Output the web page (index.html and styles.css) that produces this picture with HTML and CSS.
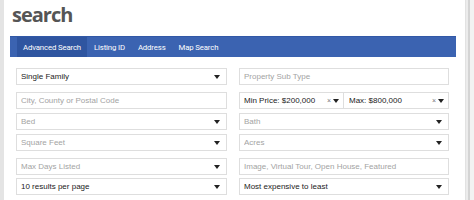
FILE: index.html
```html
<!DOCTYPE html>
<html lang="en">
<head>
  <meta charset="UTF-8">
  <title>Search</title>
  <link rel="stylesheet" href="styles.css">
</head>
<body>
  <div class="page">
    <div class="content">
      <h1 class="title">search</h1>

      <nav class="tabs">
        <a class="tab active">Advanced Search</a>
        <a class="tab">Listing ID</a>
        <a class="tab">Address</a>
        <a class="tab">Map Search</a>
      </nav>

      <form class="search-form">
        <div class="row">
          <div class="field select"><span class="value">Single Family</span><span class="caret"></span></div>
          <div class="field"><span class="placeholder">Property Sub Type</span></div>
        </div>
        <div class="row gap-lg">
          <div class="field"><span class="placeholder">City, County or Postal Code</span></div>
          <div class="price-pair">
            <div class="field select"><span class="value">Min Price: $200,000</span><span class="clear">&times;</span><span class="caret"></span></div>
            <div class="field select"><span class="value">Max: $800,000</span><span class="clear">&times;</span><span class="caret"></span></div>
          </div>
        </div>
        <div class="row">
          <div class="field select"><span class="placeholder">Bed</span><span class="caret"></span></div>
          <div class="field select"><span class="placeholder">Bath</span><span class="caret"></span></div>
        </div>
        <div class="row">
          <div class="field select"><span class="placeholder">Square Feet</span><span class="caret"></span></div>
          <div class="field select"><span class="placeholder">Acres</span><span class="caret"></span></div>
        </div>
        <div class="row gap-lg">
          <div class="field select"><span class="placeholder">Max Days Listed</span><span class="caret"></span></div>
          <div class="field"><span class="placeholder">Image, Virtual Tour, Open House, Featured</span></div>
        </div>
        <div class="row gap-sm">
          <div class="field select"><span class="value">10 results per page</span><span class="caret"></span></div>
          <div class="field select"><span class="value">Most expensive to least</span><span class="caret"></span></div>
        </div>
      </form>
    </div>
    <div class="side-strip"></div>
  </div>
</body>
</html>
```

FILE: styles.css
```css
body {
  margin: 0;
  background: #fff;
  font-family: 'Liberation Sans', Arial, sans-serif;
  overflow: hidden;
}

.page {
  display: flex;
  height: 200px;
  border-left: 4px solid #e4e4e4;
}

.content {
  flex: 1;
  padding: 0 9px 0 6px;
}

.side-strip {
  width: 8px;
  background: #ececec;
  border-left: 1px solid #e2e2e2;
  box-shadow: inset -4px 0 0 #f2f2f2, inset -6px 0 0 #d4d4d4;
}

.title {
  margin: 0;
  padding: 2px 0 0 2px;
  height: 34px;
  box-sizing: border-box;
  font-family: 'Open Sans', sans-serif;
  font-weight: 700;
  font-size: 20px;
  line-height: 26px;
  color: #555;
  letter-spacing: -1px;
}

.tabs {
  display: flex;
  height: 21px;
  margin-top: 2px;
  padding-left: 7px;
  background: #3b63b1;
  border-top: 1px solid #3158a6;
  box-sizing: border-box;
}

.tab {
  display: flex;
  align-items: center;
  padding: 0 6px;
  margin-right: 1px;
  font-family: 'Roboto', sans-serif;
  font-size: 7.8px;
  color: #fff;
  letter-spacing: -0.15px;
}

.tab.active {
  background: #2f55a0;
}

.search-form {
  padding: 11px 7px 0 6px;
}

.row {
  display: grid;
  grid-template-columns: 211px 210px;
  column-gap: 12px;
  margin-top: 4px;
}

.row:first-child {
  margin-top: 0;
}

.row.gap-lg {
  margin-top: 7px;
}

.row.gap-sm {
  margin-top: 3px;
}

.field {
  display: flex;
  align-items: center;
  height: 15px;
  padding: 0 6px 0 4px;
  border: 1px solid #dedede;
  background: #fff;
  font-size: 8px;
  min-width: 0;
}

.value {
  flex: 1;
  color: #222;
  white-space: nowrap;
  overflow: hidden;
}

.placeholder {
  flex: 1;
  color: #a3a3a3;
  white-space: nowrap;
  overflow: hidden;
}

.caret {
  width: 0;
  height: 0;
  border-left: 3.5px solid transparent;
  border-right: 3.5px solid transparent;
  border-top: 4px solid #222;
}

.clear {
  color: #777;
  font-size: 7px;
  margin-right: 2px;
}

.price-pair {
  display: grid;
  grid-template-columns: 1fr 1fr;
}

.price-pair .field {
  padding-right: 4px;
}

.price-pair .field + .field {
  border-left: none;
  padding-left: 5px;
}
```
